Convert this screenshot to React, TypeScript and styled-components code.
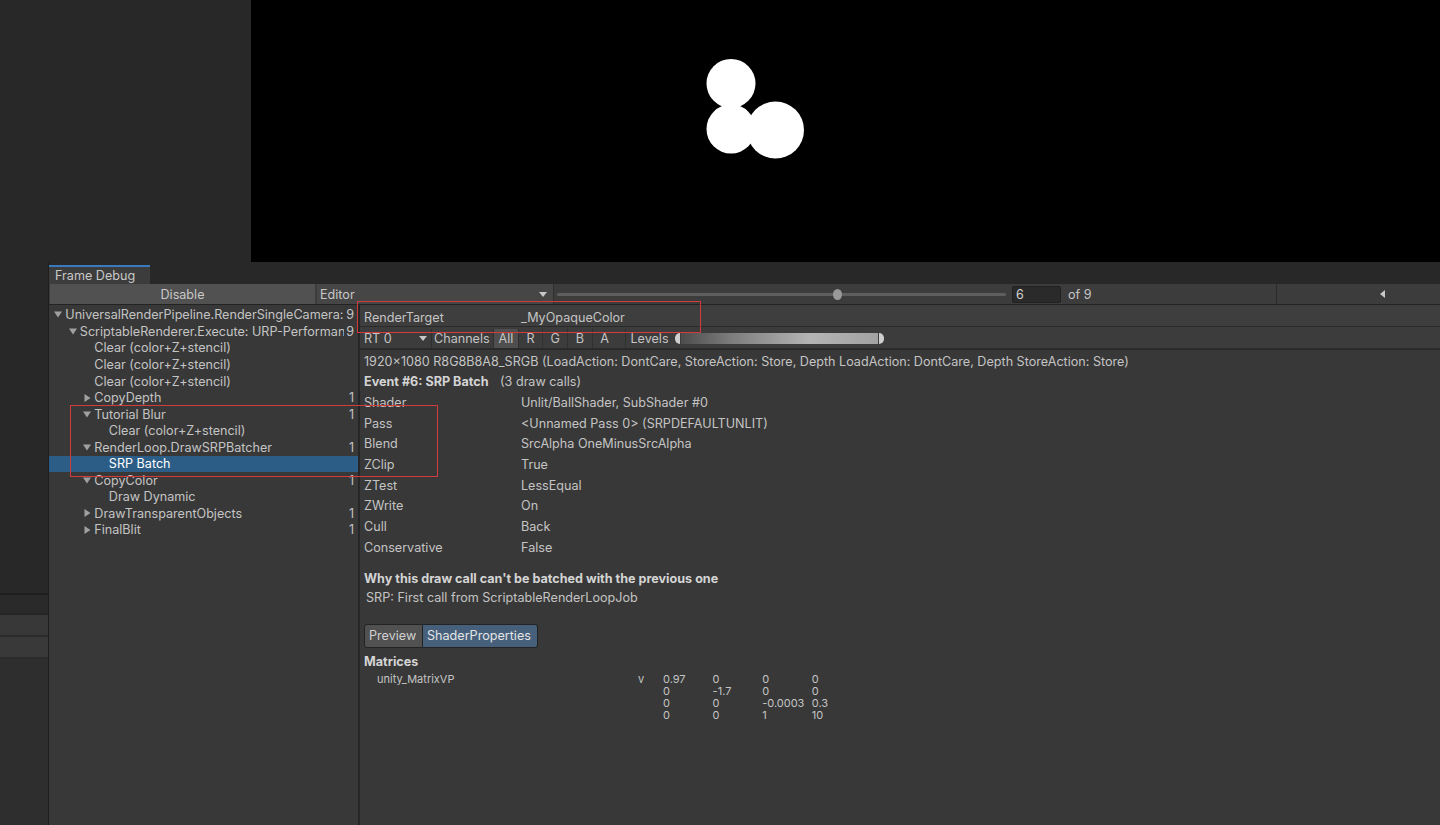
import React from 'react';
import styled, { createGlobalStyle } from 'styled-components';

const GlobalStyle = createGlobalStyle`
  html, body {
    margin: 0;
    padding: 0;
    background: #282828;
  }
  body {
    font-family: Inter, "Liberation Sans", sans-serif;
    font-size: 12.6px;
    color: #c4c4c4;
  }
`;

const Screen = styled.div`
  position: relative;
  width: 1440px;
  height: 825px;
  display: flex;
  flex-direction: column;
  overflow: hidden;
  background: #282828;
`;

const TopRow = styled.div`
  display: flex;
  height: 262px;
  flex-shrink: 0;
`;

const ScenePanel = styled.div`
  width: 251px;
  background: #282828;
`;

const GameView = styled.div`
  flex: 1;
  background: #000;

  svg {
    display: block;
  }
`;

const BottomRow = styled.div`
  flex: 1;
  display: flex;
  min-height: 0;
`;

const SideStack = styled.div`
  width: 48px;
  flex-shrink: 0;
  display: flex;
  flex-direction: column;
`;

const SideBlock = styled.div<{ $h?: number; $bg: string; $line?: string }>`
  box-sizing: border-box;
  height: ${({ $h }) => ($h ? `${$h}px` : 'auto')};
  flex: ${({ $h }) => ($h ? '0 0 auto' : '1')};
  background: ${({ $bg }) => $bg};
  border-bottom: ${({ $line }) => ($line ? `2px solid ${$line}` : 'none')};
`;

const Window = styled.div`
  flex: 1;
  min-width: 0;
  display: flex;
  flex-direction: column;
  border-left: 1px solid #1e1e1e;
`;

const TabStrip = styled.div`
  height: 22px;
  flex-shrink: 0;
  display: flex;
  align-items: flex-end;
  background: #282828;
`;

const Tab = styled.div`
  box-sizing: border-box;
  width: 101px;
  height: 19px;
  padding-left: 6px;
  border-top: 2px solid #3a79bb;
  background: #3c3c3c;
  line-height: 17px;
  color: #c8c8c8;
`;

const Toolbar = styled.div`
  box-sizing: border-box;
  height: 21px;
  flex-shrink: 0;
  display: flex;
  align-items: stretch;
  background: #3c3c3c;
  border-bottom: 1px solid #232323;
`;

const DisableButton = styled.div`
  width: 265px;
  margin-left: 1px;
  padding-top: 1px;
  display: flex;
  align-items: center;
  justify-content: center;
  background: #515151;
  color: #c8c8c8;
`;

const EditorDropdown = styled.div`
  box-sizing: border-box;
  width: 237px;
  margin-left: 2px;
  padding: 1px 6px 0 3px;
  display: flex;
  align-items: center;
  justify-content: space-between;
  background: #464646;
  border-right: 1px solid #2f2f2f;
  color: #c8c8c8;
`;

const FrameSlider = styled.div`
  position: relative;
  width: 449px;
  margin-left: 3px;
  display: flex;
  align-items: center;
`;

const SliderTrack = styled.div`
  width: 100%;
  height: 3px;
  border-radius: 2px;
  background: #5e5e5e;
`;

const SliderThumb = styled.div`
  position: absolute;
  top: 5px;
  width: 9px;
  height: 11px;
  margin-left: -5px;
  border-radius: 50%;
  background: #999999;
`;

const FrameInput = styled.div`
  box-sizing: border-box;
  width: 49px;
  height: 17px;
  margin: 2px 0 0 6px;
  padding-left: 3px;
  border: 1px solid #212121;
  border-radius: 2px;
  background: #2a2a2a;
  line-height: 15px;
  color: #d2d2d2;
`;

const FrameCount = styled.div`
  margin-left: 7px;
  padding-top: 1px;
  display: flex;
  align-items: center;
  color: #c4c4c4;
`;

const ToolbarSpacer = styled.div`
  flex: 1;
`;

const StepGroup = styled.div`
  box-sizing: border-box;
  width: 164px;
  padding-left: 103px;
  display: flex;
  align-items: center;
  border-left: 1px solid #2a2a2a;
`;

const Body = styled.div`
  flex: 1;
  min-height: 0;
  display: flex;
`;

const TreePanel = styled.div`
  width: 309px;
  flex-shrink: 0;
  padding-top: 1.6px;
  background: #383838;
  border-right: 2px solid #262626;
`;

const TreeRow = styled.div<{ $depth: number; $selected?: boolean }>`
  height: 16.56px;
  display: flex;
  align-items: center;
  padding-left: ${({ $depth }) => 5.3 + $depth * 14.5}px;
  padding-right: 4px;
  background: ${({ $selected }) => ($selected ? '#2c5d87' : 'transparent')};
  color: ${({ $selected }) => ($selected ? '#ffffff' : '#c4c4c4')};
  white-space: nowrap;
`;

const CaretSlot = styled.span`
  width: 11px;
  flex-shrink: 0;
  display: flex;
  align-items: center;

  svg {
    display: block;
  }
`;

const RowName = styled.span`
  flex: 1;
  min-width: 0;
  overflow: hidden;
`;

const RowCount = styled.span`
  width: 10px;
  flex-shrink: 0;
  text-align: right;
`;

const Detail = styled.div`
  flex: 1;
  min-width: 0;
  display: flex;
  flex-direction: column;
  background: #383838;
`;

const TargetBar = styled.div`
  box-sizing: border-box;
  height: 22px;
  padding: 4px 0 0 4px;
  display: grid;
  grid-template-columns: 157px 1fr;
  align-items: center;
  background: #3e3e3e;
  border-bottom: 1px solid #2a2a2a;
`;

const ChannelsBar = styled.div`
  box-sizing: border-box;
  height: 23px;
  padding-top: 2px;
  display: flex;
  align-items: stretch;
  background: #3c3c3c;
  border-bottom: 2px solid #2a2a2a;
`;

const RtDropdown = styled.div`
  box-sizing: border-box;
  width: 72px;
  padding: 0 4px;
  display: flex;
  align-items: center;
  justify-content: space-between;
  border-right: 1px solid #2e2e2e;
`;

const ChannelLabel = styled.div`
  box-sizing: border-box;
  width: 61px;
  padding-left: 2px;
  display: flex;
  align-items: center;
`;

const ChannelButton = styled.div<{ $active?: boolean }>`
  box-sizing: border-box;
  width: 24.7px;
  display: flex;
  align-items: center;
  justify-content: center;
  border-left: 1px solid #303030;
  background: ${({ $active }) => ($active ? '#4f4f4f' : 'transparent')};
`;

const LevelsGroup = styled.div`
  margin-left: 9px;
  padding-left: 4px;
  display: flex;
  align-items: center;
  border-left: 1px solid #303030;
`;

const LevelsLabel = styled.span`
  width: 45px;
`;

const LevelsSlider = styled.div`
  width: 209px;
  height: 11px;
  display: flex;
`;

const LevelsKnob = styled.div<{ $side: 'left' | 'right' }>`
  width: 5px;
  background: #cfcfcf;
  border-radius: ${({ $side }) => ($side === 'left' ? '6px 0 0 6px' : '0 6px 6px 0')};
`;

const LevelsRange = styled.div`
  flex: 1;
  margin: 0 1px;
  background: linear-gradient(90deg, #4c4c4c 0%, #7c7c7c 25%, #b4b4b4 65%, #a2a2a2 100%);
`;

const Content = styled.div`
  padding: 1px 0 0 4px;
  white-space: nowrap;
`;

const SummaryLine = styled.div`
  height: 21px;
  line-height: 21px;
`;

const EventLine = styled.div`
  height: 20px;
  line-height: 20px;
  display: flex;
`;

const EventTitle = styled.span`
  width: 136px;
  font-weight: 700;
  color: #d4d4d4;
`;

const PropRow = styled.div`
  height: 20.7px;
  display: grid;
  grid-template-columns: 157px 1fr;
  align-items: center;
`;

const SectionTitle = styled.div<{ $top: number; $h: number }>`
  margin-top: ${({ $top }) => $top}px;
  height: ${({ $h }) => $h}px;
  line-height: ${({ $h }) => $h}px;
  font-weight: 700;
  color: #d4d4d4;
`;

const WhyText = styled.div`
  height: 18px;
  line-height: 18px;
  padding-left: 2px;
`;

const PaneTabs = styled.div`
  margin-top: 17px;
  display: flex;
  height: 24px;
`;

const PaneTab = styled.div<{ $active?: boolean; $first?: boolean; $w: number }>`
  box-sizing: border-box;
  width: ${({ $w }) => $w}px;
  padding-left: 4px;
  display: flex;
  align-items: center;
  border: 1px solid #232323;
  border-left-width: ${({ $first }) => ($first ? 1 : 0)}px;
  border-radius: ${({ $first }) => ($first ? '3px 0 0 3px' : '0 3px 3px 0')};
  background: ${({ $active }) => ($active ? '#46607c' : '#515151')};
  color: ${({ $active }) => ($active ? '#e4e4e4' : '#d0d0d0')};
`;

const MatrixGrid = styled.div`
  margin-top: 2px;
  padding-left: 13px;
  display: grid;
  grid-template-columns: 261px 25px repeat(4, 49.6px);
  grid-auto-rows: 12.2px;
  align-items: center;
  font-size: 11px;
`;

const Annotation = styled.div<{ $x: number; $y: number; $w: number; $h: number }>`
  position: absolute;
  left: ${({ $x }) => $x}px;
  top: ${({ $y }) => $y}px;
  width: ${({ $w }) => $w}px;
  height: ${({ $h }) => $h}px;
  box-sizing: border-box;
  border: 1px solid #d23b3b;
  pointer-events: none;
`;

type Node = {
  depth: number;
  name: string;
  caret?: 'down' | 'right';
  count?: number;
  selected?: boolean;
};

const tree: Node[] = [
  { depth: 0, caret: 'down', name: 'UniversalRenderPipeline.RenderSingleCamera:', count: 9 },
  { depth: 1, caret: 'down', name: 'ScriptableRenderer.Execute: URP-Performan', count: 9 },
  { depth: 2, name: 'Clear (color+Z+stencil)' },
  { depth: 2, name: 'Clear (color+Z+stencil)' },
  { depth: 2, name: 'Clear (color+Z+stencil)' },
  { depth: 2, caret: 'right', name: 'CopyDepth', count: 1 },
  { depth: 2, caret: 'down', name: 'Tutorial Blur', count: 1 },
  { depth: 3, name: 'Clear (color+Z+stencil)' },
  { depth: 2, caret: 'down', name: 'RenderLoop.DrawSRPBatcher', count: 1 },
  { depth: 3, name: 'SRP Batch', selected: true },
  { depth: 2, caret: 'down', name: 'CopyColor', count: 1 },
  { depth: 3, name: 'Draw Dynamic' },
  { depth: 2, caret: 'right', name: 'DrawTransparentObjects', count: 1 },
  { depth: 2, caret: 'right', name: 'FinalBlit', count: 1 },
];

const props: [string, string][] = [
  ['Shader', 'Unlit/BallShader, SubShader #0'],
  ['Pass', '<Unnamed Pass 0> (SRPDEFAULTUNLIT)'],
  ['Blend', 'SrcAlpha OneMinusSrcAlpha'],
  ['ZClip', 'True'],
  ['ZTest', 'LessEqual'],
  ['ZWrite', 'On'],
  ['Cull', 'Back'],
  ['Conservative', 'False'],
];

const matrix = [
  ['0.97', '0', '0', '0'],
  ['0', '-1.7', '0', '0'],
  ['0', '0', '-0.0003', '0.3'],
  ['0', '0', '1', '10'],
];

const Caret = ({ dir, color = '#a0a0a0' }: { dir: 'down' | 'right'; color?: string }) =>
  dir === 'down' ? (
    <svg width="8" height="7" viewBox="0 0 8 7">
      <path d="M0 0.5 H8 L4 6.5 Z" fill={color} />
    </svg>
  ) : (
    <svg width="7" height="8" viewBox="0 0 7 8" style={{ marginLeft: 1 }}>
      <path d="M0.5 0 V8 L6.5 4 Z" fill={color} />
    </svg>
  );

const DropArrow = () => (
  <svg width="8" height="5" viewBox="0 0 8 5">
    <path d="M0 0 H8 L4 5 Z" fill="#c8c8c8" />
  </svg>
);

const PrevArrow = () => (
  <svg width="5" height="8" viewBox="0 0 5 8">
    <path d="M5 0 V8 L0 4 Z" fill="#c8c8c8" />
  </svg>
);

export default function App() {
  const frame = 6;
  const total = 9;
  const thumb = ((frame - 1) / (total - 1)) * 100;

  return (
    <Screen>
      <GlobalStyle />
      <TopRow>
        <ScenePanel />
        <GameView>
          <svg width="1189" height="262">
            <circle cx="480" cy="83.5" r="24.5" fill="#fff" />
            <circle cx="480" cy="129" r="24.5" fill="#fff" />
            <circle cx="524.5" cy="130" r="28.5" fill="#fff" />
          </svg>
        </GameView>
      </TopRow>

      <BottomRow>
        <SideStack>
          <SideBlock $h={333} $bg="#282828" $line="#1f1f1f" />
          <SideBlock $h={20} $bg="#2a2a2a" $line="#242424" />
          <SideBlock $h={22} $bg="#383838" $line="#2b2b2b" />
          <SideBlock $h={22} $bg="#393939" $line="#2b2b2b" />
          <SideBlock $bg="#2e2e2e" />
        </SideStack>

        <Window>
          <TabStrip>
            <Tab>Frame Debug</Tab>
          </TabStrip>

          <Toolbar>
            <DisableButton>Disable</DisableButton>
            <EditorDropdown>
              <span>Editor</span>
              <DropArrow />
            </EditorDropdown>
            <FrameSlider>
              <SliderTrack />
              <SliderThumb style={{ left: `${thumb}%` }} />
            </FrameSlider>
            <FrameInput>{frame}</FrameInput>
            <FrameCount>of {total}</FrameCount>
            <ToolbarSpacer />
            <StepGroup>
              <PrevArrow />
            </StepGroup>
          </Toolbar>

          <Body>
            <TreePanel>
              {tree.map((n, i) => (
                <TreeRow key={i} $depth={n.depth} $selected={n.selected}>
                  <CaretSlot>{n.caret && <Caret dir={n.caret} />}</CaretSlot>
                  <RowName>{n.name}</RowName>
                  <RowCount>{n.count ?? ''}</RowCount>
                </TreeRow>
              ))}
            </TreePanel>

            <Detail>
              <TargetBar>
                <span>RenderTarget</span>
                <span>_MyOpaqueColor</span>
              </TargetBar>

              <ChannelsBar>
                <RtDropdown>
                  <span>RT 0</span>
                  <DropArrow />
                </RtDropdown>
                <ChannelLabel>Channels</ChannelLabel>
                <ChannelButton $active>All</ChannelButton>
                <ChannelButton>R</ChannelButton>
                <ChannelButton>G</ChannelButton>
                <ChannelButton>B</ChannelButton>
                <ChannelButton>A</ChannelButton>
                <LevelsGroup>
                  <LevelsLabel>Levels</LevelsLabel>
                  <LevelsSlider>
                    <LevelsKnob $side="left" />
                    <LevelsRange />
                    <LevelsKnob $side="right" />
                  </LevelsSlider>
                </LevelsGroup>
              </ChannelsBar>

              <Content>
                <SummaryLine>
                  1920x1080 R8G8B8A8_SRGB (LoadAction: DontCare, StoreAction: Store, Depth LoadAction: DontCare, Depth StoreAction: Store)
                </SummaryLine>
                <EventLine>
                  <EventTitle>Event #6: SRP Batch</EventTitle>
                  <span>(3 draw calls)</span>
                </EventLine>
                {props.map(([k, v]) => (
                  <PropRow key={k}>
                    <span>{k}</span>
                    <span>{v}</span>
                  </PropRow>
                ))}

                <SectionTitle $top={11.4} $h={20}>
                  Why this draw call can't be batched with the previous one
                </SectionTitle>
                <WhyText>SRP: First call from ScriptableRenderLoopJob</WhyText>

                <PaneTabs>
                  <PaneTab $first $w={59}>Preview</PaneTab>
                  <PaneTab $active $w={115}>ShaderProperties</PaneTab>
                </PaneTabs>

                <SectionTitle $top={4.7} $h={18}>
                  Matrices
                </SectionTitle>
                <MatrixGrid>
                  {matrix.map((row, r) => (
                    <React.Fragment key={r}>
                      <span>{r === 0 ? 'unity_MatrixVP' : ''}</span>
                      <span>{r === 0 ? 'v' : ''}</span>
                      {row.map((c, ci) => (
                        <span key={ci}>{c}</span>
                      ))}
                    </React.Fragment>
                  ))}
                </MatrixGrid>
              </Content>
            </Detail>
          </Body>
        </Window>
      </BottomRow>

      <Annotation $x={357} $y={301} $w={344} $h={32} />
      <Annotation $x={70} $y={405} $w={368} $h={72} />
    </Screen>
  );
}
